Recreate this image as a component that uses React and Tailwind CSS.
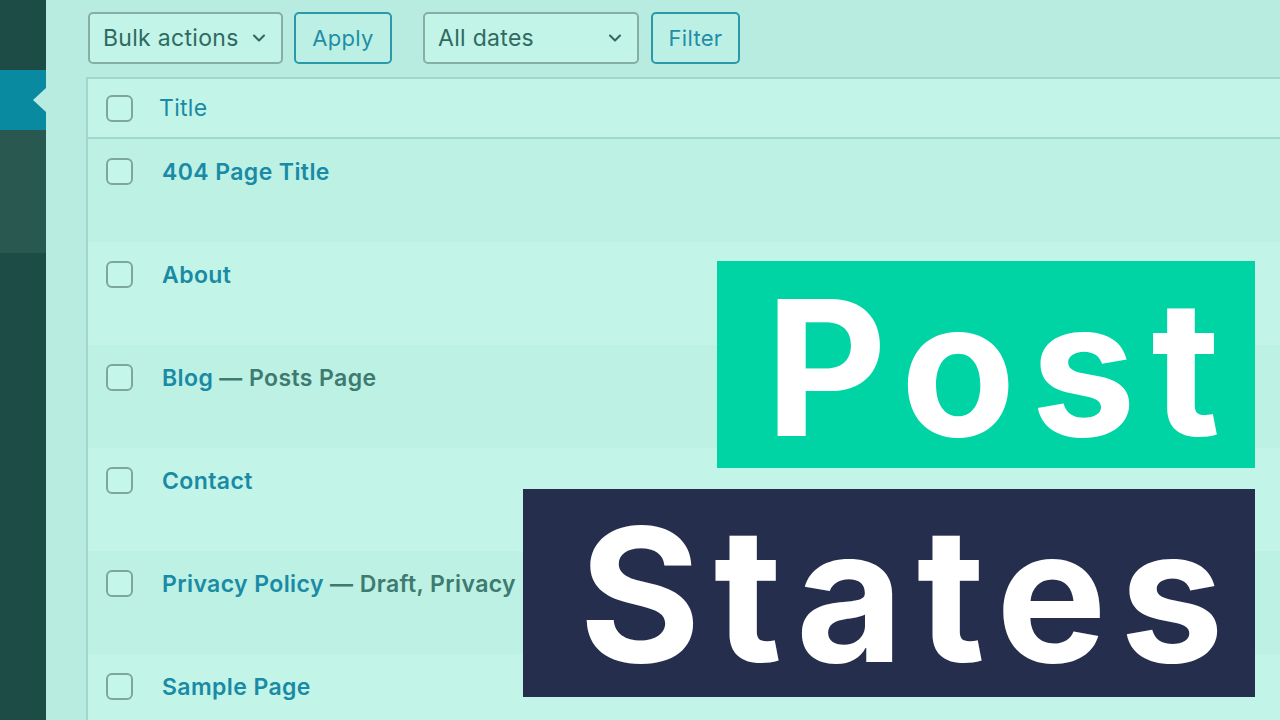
import { ChevronDown } from "lucide-react";

const rows = [
  { title: "404 Page Title" },
  { title: "About" },
  { title: "Blog", state: "Posts Page" },
  { title: "Contact" },
  { title: "Privacy Policy", state: "Draft, Privacy Policy Page" },
  { title: "Sample Page" },
];

function Checkbox() {
  return <div className="w-[27px] h-[27px] shrink-0 rounded-[6px] border-2 border-[#7fa69d] bg-[#c4f6ea]" />;
}

function Sidebar() {
  return (
    <div className="w-[46px] shrink-0 flex flex-col bg-[#1d4b46]">
      <div className="h-[70px] bg-[#1d4c47]" />
      <div className="h-[60px] bg-[#0a8aa0] relative">
        <div className="absolute right-0 top-[18px] w-0 h-0 border-y-[12px] border-y-transparent border-r-[13px] border-r-[#b9ece0]" />
      </div>
      <div className="h-[123px] bg-[#285850]" />
      <div className="flex-1" />
    </div>
  );
}

export default function App() {
  return (
    <div
      className="w-[1280px] h-[720px] overflow-hidden flex relative bg-[#b9ece0]"
      style={{ fontFamily: "Inter, 'Noto Sans', sans-serif" }}
    >
      <Sidebar />
      <div className="flex-1 pl-[40px] pt-[12px] min-w-0">
        {/* toolbar */}
        <div className="flex items-center h-[52px] pl-[2px]">
          <div className="w-[195px] h-[52px] rounded-[5px] border-2 border-[#86aea5] bg-[#c2f4e8] flex items-center pl-[13px] pr-[12px] justify-between text-[23px] tracking-[0.3px] text-[#2f6a62]">
            <span>Bulk actions</span>
            <ChevronDown size={20} strokeWidth={2.5} className="text-[#2f6a62]" />
          </div>
          <div className="ml-[11px] w-[98px] h-[52px] rounded-[5px] border-2 border-[#2a9aa8] bg-[#bdf0e4] flex items-center justify-center text-[22px] tracking-[0.3px] text-[#1f8ea6]">
            Apply
          </div>
          <div className="ml-[31px] w-[216px] h-[52px] rounded-[5px] border-2 border-[#86aea5] bg-[#c2f4e8] flex items-center pl-[13px] pr-[12px] justify-between text-[23px] tracking-[0.3px] text-[#2f6a62]">
            <span>All dates</span>
            <ChevronDown size={20} strokeWidth={2.5} className="text-[#2f6a62]" />
          </div>
          <div className="ml-[12px] w-[89px] h-[52px] rounded-[5px] border-2 border-[#2a9aa8] bg-[#bdf0e4] flex items-center justify-center text-[22px] tracking-[0.3px] text-[#1f8ea6]">
            Filter
          </div>
        </div>

        {/* table */}
        <div className="mt-[13px] border-l-2 border-t-2 border-[#a3d6ca] bg-[#c2f5e8]">
          <div className="h-[60px] flex items-center pl-[18px] gap-[26px] border-b-2 border-[#a3d6ca]">
            <Checkbox />
            <span className="text-[23px] tracking-[0.3px] text-[#1a8aa5]">Title</span>
          </div>
          {rows.map((r, i) => (
            <div
              key={r.title}
              className={`h-[103px] flex items-start pt-[19px] pl-[18px] gap-[29px] ${i % 2 === 0 ? "bg-[#bcf1e4]" : "bg-[#c2f5e8]"}`}
            >
              <Checkbox />
              <span className="text-[23px] tracking-[0.4px] font-semibold text-[#1a8aa5] leading-[28px] whitespace-nowrap">
                {r.title}
                {r.state && <span className="text-[#3e7a70]"> — {r.state}</span>}
              </span>
            </div>
          ))}
        </div>
      </div>

      {/* title card */}
      <div className="absolute left-[717px] top-[261px] w-[538px] h-[207px] bg-[#00d4a5] flex items-center justify-end pr-[20px]">
        <span className="text-white font-bold text-[188px] leading-none tracking-[15px] mt-[6px]">Post</span>
      </div>
      <div className="absolute left-[523px] top-[489px] w-[732px] h-[208px] bg-[#262e4d] flex items-center justify-end pr-[18px]">
        <span className="text-white font-bold text-[186px] leading-none tracking-[13px] mt-[4px]">States</span>
      </div>
    </div>
  );
}
